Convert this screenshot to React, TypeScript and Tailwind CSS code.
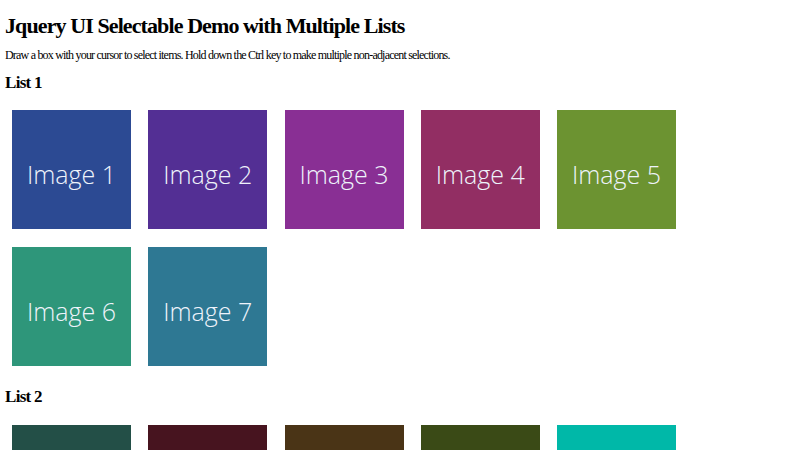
import React from "react";

const list1 = [
	{ label: "Image 1", color: "bg-[#2c4a93]" },
	{ label: "Image 2", color: "bg-[#532f94]" },
	{ label: "Image 3", color: "bg-[#892f94]" },
	{ label: "Image 4", color: "bg-[#922e63]" },
	{ label: "Image 5", color: "bg-[#6c9331]" },
	{ label: "Image 6", color: "bg-[#2e967a]" },
	{ label: "Image 7", color: "bg-[#2e7893]" },
];

const list2 = [
	{ label: "Image 8", color: "bg-[#234f47]" },
	{ label: "Image 9", color: "bg-[#47141f]" },
	{ label: "Image 10", color: "bg-[#4a3416]" },
	{ label: "Image 11", color: "bg-[#3a4a16]" },
	{ label: "Image 12", color: "bg-[#00b8a8]" },
];

function Tile({ label, color }: { label: string; color: string }) {
	return (
		<li
			className={`${color} w-[119px] h-[119px] flex items-center justify-center pt-[10px] text-[#eef3fb] text-[25px] font-light font-['Open_Sans',sans-serif]`}
		>
			{label}
		</li>
	);
}

export default function App() {
	return (
		<div className="bg-white h-[450px] overflow-hidden px-[5px] font-['Liberation_Serif',serif] text-black">
			<h1 className="text-[22px] tracking-[-0.9px] font-bold pt-[12px] leading-[28px]">
				Jquery UI Selectable Demo with Multiple Lists
			</h1>
			<p className="text-[12px] tracking-[-0.8px] mt-[8px] leading-[14px]">
				Draw a box with your cursor to select items. Hold down the Ctrl key to
				make multiple non-adjacent selections.
			</p>
			<h3 className="text-[17px] tracking-[-0.7px] font-bold mt-[11px] leading-[20px]">
				List 1
			</h3>
			<ul className="flex flex-wrap gap-x-[17.25px] gap-y-[18px] w-[700px] pl-[7px] mt-[17px]">
				{list1.map((t) => (
					<Tile key={t.label} {...t} />
				))}
			</ul>
			<h3 className="text-[17px] tracking-[-0.7px] font-bold mt-[21px] leading-[20px]">
				List 2
			</h3>
			<ul className="flex flex-wrap gap-x-[17.25px] gap-y-[18px] w-[700px] pl-[7px] mt-[18px]">
				{list2.map((t) => (
					<Tile key={t.label} {...t} />
				))}
			</ul>
		</div>
	);
}
